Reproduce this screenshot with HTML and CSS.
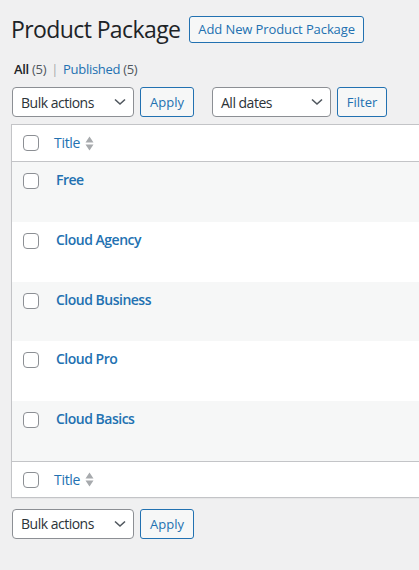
FILE: index.html
```html
<!DOCTYPE html>
<html lang="en">
<head>
<meta charset="utf-8">
<title>Product Package</title>
<link rel="stylesheet" href="styles.css">
</head>
<body>
<div class="wrap">
  <div class="title-row">
    <h1 class="page-title">Product Package</h1>
    <a class="title-action" href="#">Add New Product Package</a>
  </div>

  <ul class="subsubsub">
    <li><span class="current">All</span> <span class="count">(5)</span></li>
    <li class="sep">|</li>
    <li><a href="#" class="view-link">Published</a> <span class="count">(5)</span></li>
  </ul>

  <div class="tablenav top">
    <div class="select bulk"><span>Bulk actions</span><svg class="chev" width="12" height="8" viewBox="0 0 12 8"><path d="M1 1.5 L6 6 L11 1.5" fill="none" stroke="#50575e" stroke-width="1.6"/></svg></div>
    <button class="button apply">Apply</button>
    <div class="select dates"><span>All dates</span><svg class="chev" width="12" height="8" viewBox="0 0 12 8"><path d="M1 1.5 L6 6 L11 1.5" fill="none" stroke="#50575e" stroke-width="1.6"/></svg></div>
    <button class="button filter">Filter</button>
  </div>

  <div class="list">
    <div class="list-head">
      <span class="cb"></span>
      <span class="col-title">Title <svg class="sort" width="9" height="15" viewBox="0 0 9 15"><path d="M0.5 6.5 L4.5 0.5 L8.5 6.5 Z M0.5 8.5 L4.5 14.5 L8.5 8.5 Z" fill="#a7aaad"/></svg></span>
    </div>
    <div class="row alt"><span class="cb"></span><a class="row-title" href="#">Free</a></div>
    <div class="row"><span class="cb"></span><a class="row-title" href="#">Cloud Agency</a></div>
    <div class="row alt"><span class="cb"></span><a class="row-title" href="#">Cloud Business</a></div>
    <div class="row"><span class="cb"></span><a class="row-title" href="#">Cloud Pro</a></div>
    <div class="row alt"><span class="cb"></span><a class="row-title" href="#">Cloud Basics</a></div>
    <div class="list-foot">
      <span class="cb"></span>
      <span class="col-title">Title <svg class="sort" width="9" height="15" viewBox="0 0 9 15"><path d="M0.5 6.5 L4.5 0.5 L8.5 6.5 Z M0.5 8.5 L4.5 14.5 L8.5 8.5 Z" fill="#a7aaad"/></svg></span>
    </div>
  </div>

  <div class="tablenav bottom">
    <div class="select bulk"><span>Bulk actions</span><svg class="chev" width="12" height="8" viewBox="0 0 12 8"><path d="M1 1.5 L6 6 L11 1.5" fill="none" stroke="#50575e" stroke-width="1.6"/></svg></div>
    <button class="button apply">Apply</button>
  </div>
</div>
</body>
</html>
```

FILE: styles.css
```css
html, body {
  margin: 0;
  padding: 0;
}
body {
  background: #f0f0f1;
  color: #1d2327;
  font-family: "Open Sans", "Noto Sans", "Liberation Sans", sans-serif;
  font-size: 13px;
  overflow: hidden;
  width: 419px;
  height: 570px;
}
a { text-decoration: none; color: #2271b1; }

.wrap {
  padding: 16px 0 0 11px;
}

.title-row {
  display: flex;
  align-items: center;
  height: 27px;
}
.page-title {
  margin: 0;
  font-size: 23px;
  font-weight: 400;
  line-height: 27px;
  letter-spacing: -0.6px;
}
.title-action {
  margin-left: 9px;
  box-sizing: border-box;
  height: 27px;
  line-height: 25px;
  padding: 0 8px;
  border: 1px solid #2271b1;
  border-radius: 3px;
  background: #f6f7f7;
  color: #2271b1;
  font-size: 13px;
  letter-spacing: -0.1px;
  white-space: nowrap;
}

.subsubsub {
  list-style: none;
  margin: 16px 0 0 3px;
  padding: 0;
  display: flex;
  gap: 5px;
  line-height: 20px;
  font-size: 13px;
  letter-spacing: -0.3px;
  color: #50575e;
}
.subsubsub .current {
  color: #1d2327;
  font-weight: 600;
}
.subsubsub .sep { color: #a7aaad; }
.view-link { color: #2271b1; }

.tablenav {
  display: flex;
  height: 30px;
  padding-left: 1px;
}
.tablenav.top { margin-top: 8px; }
.tablenav.bottom { margin-top: 11px; }

.select {
  box-sizing: border-box;
  height: 30px;
  border: 1px solid #8c8f94;
  border-radius: 4px;
  background: #fff;
  padding: 0 7px 0 8px;
  display: flex;
  align-items: center;
  justify-content: space-between;
  font-size: 14px;
  letter-spacing: -0.5px;
  color: #2c3338;
}
.select.bulk { width: 122px; }
.select.dates { width: 119px; margin-left: 18px; }
.chev { display: block; }

.button {
  box-sizing: border-box;
  height: 30px;
  margin-left: 6px;
  padding: 0;
  border: 1px solid #2271b1;
  border-radius: 3px;
  background: #f6f7f7;
  color: #2271b1;
  font-family: inherit;
  font-size: 13px;
}
.button.apply { width: 54px; }
.button.filter { width: 50px; }

.list {
  box-sizing: border-box;
  width: 408px;
  margin-top: 7px;
  border: 1px solid #c3c4c7;
  border-right: none;
  background: #fff;
  box-shadow: 0 1px 1px rgba(0,0,0,.04);
}
.list-head, .list-foot {
  display: flex;
  align-items: flex-start;
  height: 36px;
}
.list-head { border-bottom: 1px solid #c3c4c7; }
.list-foot { border-top: 1px solid #c3c4c7; height: 35px; }

.cb {
  box-sizing: border-box;
  width: 16px;
  height: 16px;
  border: 1px solid #8c8f94;
  border-radius: 4px;
  background: #fff;
  margin: 10px 0 0 11px;
  flex: none;
}
.col-title {
  display: flex;
  align-items: center;
  gap: 5px;
  margin: 8px 0 0 15px;
  line-height: 20px;
  font-size: 14px;
  letter-spacing: -0.3px;
  color: #2271b1;
}
.sort { display: block; }

.row {
  display: flex;
  align-items: flex-start;
  height: 59.8px;
}
.row.alt { background: #f6f7f7; }
.row .cb { margin-top: 11px; }
.row-title {
  margin: 8px 0 0 17px;
  line-height: 20px;
  font-size: 14px;
  font-weight: 600;
  letter-spacing: -0.5px;
  color: #2271b1;
}
```
